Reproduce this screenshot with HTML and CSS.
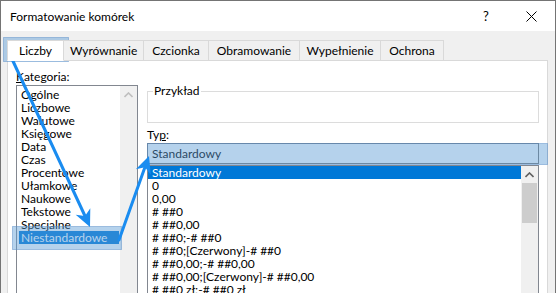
FILE: index.html
```html
<!DOCTYPE html>
<html lang="pl">
<head>
  <meta charset="UTF-8">
  <meta name="viewport" content="width=device-width, initial-scale=1.0">
  <link rel="stylesheet" href="styles.css">
  <title>Formatowanie komórek</title>
</head>
<body>
  <div class="window">
    <div class="titlebar">
      <span class="title">Formatowanie komórek</span>
      <span class="help">?</span>
      <span class="close">
        <svg width="11" height="11" viewBox="0 0 11 11"><path d="M0.5 0.5 L10.5 10.5 M10.5 0.5 L0.5 10.5" stroke="#000" stroke-width="1" fill="none"/></svg>
      </span>
    </div>

    <div class="dialog">
      <div class="tabs">
        <div class="tab active">Liczby</div>
        <div class="tab">Wyrównanie</div>
        <div class="tab">Czcionka</div>
        <div class="tab">Obramowanie</div>
        <div class="tab">Wypełnienie</div>
        <div class="tab">Ochrona</div>
      </div>

      <div class="panel">
        <div class="category-col">
          <div class="label"><u>K</u>ategoria:</div>
          <div class="listbox category-list">
            <ul class="items">
              <li>Ogólne</li>
              <li>Liczbowe</li>
              <li>Walutowe</li>
              <li>Księgowe</li>
              <li>Data</li>
              <li>Czas</li>
              <li>Procentowe</li>
              <li>Ułamkowe</li>
              <li>Naukowe</li>
              <li>Tekstowe</li>
              <li>Specjalne</li>
              <li class="selected">Niestandardowe</li>
            </ul>
            <div class="scrollbar disabled">
              <span class="scroll-btn">
                <svg width="9" height="6" viewBox="0 0 9 6"><path d="M0.5 5 L4.5 1 L8.5 5" stroke="currentColor" stroke-width="1.6" fill="none"/></svg>
              </span>
            </div>
          </div>
        </div>

        <div class="type-col">
          <fieldset class="sample">
            <legend>Przykład</legend>
          </fieldset>
          <div class="label">Ty<u>p</u>:</div>
          <div class="textbox">Standardowy</div>
          <div class="listbox type-list">
            <ul class="items">
              <li class="selected">Standardowy</li>
              <li>0</li>
              <li>0,00</li>
              <li># ##0</li>
              <li># ##0,00</li>
              <li># ##0;-# ##0</li>
              <li># ##0;[Czerwony]-# ##0</li>
              <li># ##0,00;-# ##0,00</li>
              <li># ##0,00;[Czerwony]-# ##0,00</li>
              <li># ##0 zł;-# ##0 zł</li>
            </ul>
            <div class="scrollbar">
              <span class="scroll-btn">
                <svg width="9" height="6" viewBox="0 0 9 6"><path d="M0.5 5 L4.5 1 L8.5 5" stroke="currentColor" stroke-width="1.6" fill="none"/></svg>
              </span>
              <span class="thumb"></span>
            </div>
          </div>
        </div>
      </div>
    </div>

    <!-- annotation layer: highlight boxes and arrows drawn over the dialog -->
    <svg class="annotations" width="556" height="293" viewBox="0 0 556 293">
      <g fill="#5b9bd5" fill-opacity="0.45" stroke="#5b8fc8" stroke-opacity="0.5">
        <rect x="3.5" y="37.5" width="65" height="24"/>
        <rect x="12.5" y="226.5" width="109" height="23"/>
        <rect x="147.5" y="143.5" width="400" height="21"/>
      </g>
      <g stroke="#1a8cf0" stroke-width="3" stroke-linecap="round" fill="#1a8cf0">
        <line x1="12" y1="59" x2="85" y2="216"/>
        <line x1="119" y1="240" x2="145" y2="167"/>
      </g>
      <g fill="#1a8cf0">
        <polygon points="90,227 75.7,214.8 85,216.1 90.3,208.2"/>
        <polygon points="149,156 150.8,174.7 145,167.3 135.8,169.3"/>
      </g>
    </svg>
  </div>
</body>
</html>
```

FILE: styles.css
```css
* {
  box-sizing: border-box;
}

body {
  margin: 0;
  font-family: Lato, "Noto Sans", sans-serif;
  font-size: 12px;
  color: #000;
  background-color: #fff;
}

.window {
  position: relative;
  width: 556px;
  height: 293px;
  border: 1px solid #747474;
  border-bottom: none;
  overflow: hidden;
  background-color: #f0f0f0;
}

.titlebar {
  display: flex;
  align-items: center;
  height: 30px;
  padding-left: 9px;
  background-color: #fff;
  font-size: 12px;
}

.title {
  flex: 1;
}

.help {
  width: 12px;
  margin-right: 31px;
  font-size: 13px;
}

.close {
  display: flex;
  margin-right: 18px;
}

.dialog {
  padding: 9px 7px 0 6px;
}

/* tabs */
.tabs {
  display: flex;
  height: 21px;
  margin-bottom: -1px;
  position: relative;
  z-index: 1;
}

.tab {
  height: 21px;
  line-height: 19px;
  padding: 0 6px;
  border: 1px solid #d9d9d9;
  border-left: none;
  background-color: #f0f0f0;
  text-align: center;
}

.tab.active {
  width: 57px;
  border-left: 1px solid #d9d9d9;
  border-bottom-color: #fff;
  background-color: #fff;
}

.tab:nth-child(2) { width: 80px; }
.tab:nth-child(3) { width: 65px; }
.tab:nth-child(4) { width: 91px; }
.tab:nth-child(5) { width: 81px; }
.tab:nth-child(6) { width: 63px; }

.panel {
  display: flex;
  gap: 9px;
  height: 240px;
  padding: 9px 8px 0 8px;
  border: 1px solid #d9d9d9;
  background-color: #fff;
}

.label {
  height: 15px;
  line-height: 14px;
}

.label u {
  text-decoration-thickness: 1px;
}

/* list boxes */
.category-col {
  display: flex;
  flex-direction: column;
  width: 122px;
}

.type-col {
  display: flex;
  flex-direction: column;
  flex: 1;
}

.listbox {
  display: flex;
  flex: 1;
  border: 1px solid #828790;
  background-color: #fff;
}

.items {
  flex: 1;
  margin: 0;
  padding: 2px 1px 0 2px;
  list-style: none;
}

.items li {
  height: 13px;
  line-height: 13px;
  padding-left: 2px;
  white-space: nowrap;
}

.items li.selected {
  background-color: #0078d7;
  color: #fff;
}

.type-list {
  margin-top: 1px;
}

.type-list .items {
  padding: 0;
}

.type-list .items li {
  padding-left: 4px;
}

.scrollbar {
  display: flex;
  flex-direction: column;
  width: 17px;
  background-color: #f0f0f0;
}

.scroll-btn {
  display: flex;
  align-items: center;
  justify-content: center;
  height: 17px;
  color: #606060;
}

.scrollbar.disabled .scroll-btn {
  color: #bfbfbf;
}

.thumb {
  height: 40px;
  margin: 0 1px;
  background-color: #cdcdcd;
}

/* sample group and type field */
.sample {
  height: 39px;
  margin: 14px 0 5px 0;
  padding: 0;
  border: 1px solid #dcdcdc;
}

.sample legend {
  margin-left: 5px;
  padding: 0 1px;
  line-height: 14px;
}

.textbox {
  height: 21px;
  line-height: 19px;
  padding-left: 4px;
  border: 1px solid #7a7a7a;
}

.annotations {
  position: absolute;
  top: -1px;
  left: -1px;
  pointer-events: none;
}
```
